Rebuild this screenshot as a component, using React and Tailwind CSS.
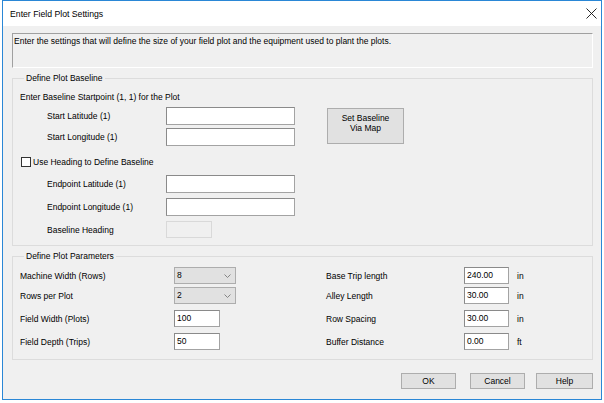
import React from "react";

const T = "text-[8.5px] leading-[10px]";

function TextBox({ w = "w-[129px]", h = "h-[18px]", value = "", disabled = false }) {
  return (
    <div
      className={`${w} ${h} flex items-center pl-[2px] pb-[2px] ${
        disabled ? "bg-[#f0f0f0] border border-[#d9d9d9]" : "bg-white border border-[#a3a3a3] border-t-[#8a8a8a] border-l-[#8a8a8a]"
      } ${T}`}
    >
      {value}
    </div>
  );
}

function Select({ value }) {
  return (
    <div className={`w-[62px] h-[17px] bg-[#e1e1e1] border border-[#adadad] flex items-center justify-between pl-[2px] pr-[4px] pb-[1px] ${T}`}>
      <span>{value}</span>
      <svg width="7" height="4" viewBox="0 0 7 4" className="mt-[1px]">
        <path d="M0.5 0.5 L3.5 3.5 L6.5 0.5" fill="none" stroke="#7a7a7a" strokeWidth="0.9" />
      </svg>
    </div>
  );
}

function Button({ children, w }) {
  return (
    <div className={`${w} h-[16px] bg-[#e1e1e1] border border-[#adadad] flex items-center justify-center ${T}`}>
      {children}
    </div>
  );
}

function BaseRow({ label, mt }) {
  return (
    <div className={`flex items-center ${mt}`}>
      <div className={`ml-[27px] w-[119px] ${T}`}>{label}</div>
      <TextBox />
    </div>
  );
}

function ParamRow({ mt, label, control, rlabel, rvalue, unit }) {
  return (
    <div className={`flex items-center ${mt}`}>
      <div className={`w-[154px] ${T}`}>{label}</div>
      <div className="w-[152px]">{control}</div>
      <div className={`w-[138px] ${T}`}>{rlabel}</div>
      <TextBox w="w-[45px]" h="h-[17px]" value={rvalue} />
      <div className={`ml-[8px] ${T}`}>{unit}</div>
    </div>
  );
}

export default function App() {
  return (
    <div className="w-[604px] h-[403px] bg-white font-['Liberation_Sans',Arial,sans-serif] text-black">
      <div className="ml-[2px] w-[600px] h-[400px] border border-[#2a87d6] bg-[#f0f0f0] flex flex-col">
        {/* Title bar */}
        <div className="h-[25px] bg-white flex items-center justify-between pl-[7px] pr-[4px]">
          <span className="text-[8.7px] leading-[10px]">Enter Field Plot Settings</span>
          <svg width="11" height="11" viewBox="0 0 11 11">
            <path d="M0.5 0.5 L10.5 10.5 M10.5 0.5 L0.5 10.5" stroke="#111" strokeWidth="0.9" fill="none" />
          </svg>
        </div>

        <div className="pl-[9px] pr-[8px] flex flex-col">
          {/* Description */}
          <div className={`mt-[7px] h-[35px] border border-[#a0a0a0] border-r-white border-b-white pl-[1px] pt-[2px] ${T}`}>
            Enter the settings that will define the size of your field plot and the equipment used to plant the plots.
          </div>

          {/* Define Plot Baseline */}
          <fieldset className="mt-[5px] border border-[#dcdcdc] pl-[7px] pt-[9px] pb-[7px]">
            <legend className={`ml-[4px] px-[2px] ${T}`}>Define Plot Baseline</legend>
            <div className={T}>Enter Baseline Startpoint (1, 1) for the Plot</div>
            <div className="flex items-start mt-[5px]">
              <div className="flex flex-col">
                <BaseRow label="Start Latitude (1)" mt="" />
                <BaseRow label="Start Longitude (1)" mt="mt-[3px]" />
              </div>
              <div className={`ml-[32px] mt-[1px] w-[77px] h-[36px] bg-[#e1e1e1] border border-[#adadad] flex items-start justify-center pt-[4px] text-center ${T}`}>
                Set Baseline
                <br />
                Via Map
              </div>
            </div>
            <div className="flex items-center mt-[11px] h-[10px]">
              <div className="ml-[1px] w-[10px] h-[10px] bg-white border border-[#333333]" />
              <span className={`ml-[2px] ${T}`}>Use Heading to Define Baseline</span>
            </div>
            <BaseRow label="Endpoint Latitude (1)" mt="mt-[8px]" />
            <BaseRow label="Endpoint Longitude (1)" mt="mt-[5px]" />
            <div className="flex items-center mt-[5px]">
              <div className={`ml-[27px] w-[119px] ${T}`}>Baseline Heading</div>
              <TextBox w="w-[46px]" h="h-[17px]" disabled />
            </div>
          </fieldset>

          {/* Define Plot Parameters */}
          <fieldset className="mt-[5px] border border-[#dcdcdc] pl-[7px] pt-[6px] pb-[9px]">
            <legend className={`ml-[4px] px-[2px] ${T}`}>Define Plot Parameters</legend>
            <ParamRow
              mt=""
              label="Machine Width (Rows)"
              control={<Select value="8" />}
              rlabel="Base Trip length"
              rvalue="240.00"
              unit="in"
            />
            <ParamRow
              mt="mt-[3px]"
              label="Rows per Plot"
              control={<Select value="2" />}
              rlabel="Alley Length"
              rvalue="30.00"
              unit="in"
            />
            <ParamRow
              mt="mt-[6px]"
              label="Field Width (Plots)"
              control={<TextBox w="w-[46px]" h="h-[17px]" value="100" />}
              rlabel="Row Spacing"
              rvalue="30.00"
              unit="in"
            />
            <ParamRow
              mt="mt-[6px]"
              label="Field Depth (Trips)"
              control={<TextBox w="w-[46px]" h="h-[17px]" value="50" />}
              rlabel="Buffer Distance"
              rvalue="0.00"
              unit="ft"
            />
          </fieldset>

          {/* Buttons */}
          <div className="mt-[13px] flex justify-end">
            <Button w="w-[55px]">OK</Button>
            <div className="ml-[14px]">
              <Button w="w-[55px]">Cancel</Button>
            </div>
            <div className="ml-[11px]">
              <Button w="w-[57px]">Help</Button>
            </div>
          </div>
        </div>
      </div>
    </div>
  );
}
